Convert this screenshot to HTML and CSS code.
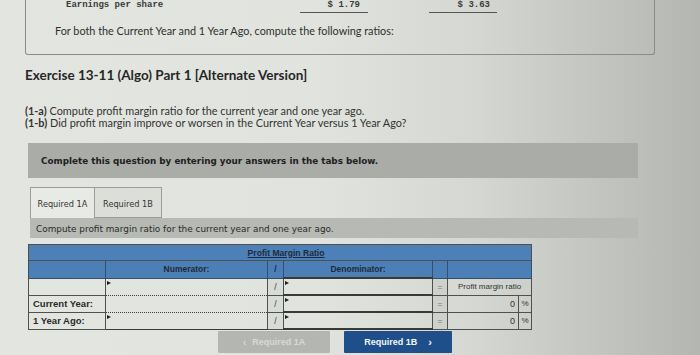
FILE: index.html
```html
<!DOCTYPE html>
<html>
<head>
<meta charset="utf-8">
<link rel="stylesheet" href="styles.css">
</head>
<body>
<div class="page">
  <div class="topbox">
    <div class="eps">
      <span class="eps-label">Earnings per share</span>
      <span class="eps-val v1">$ 1.79</span>
      <span class="eps-gap"></span>
      <span class="eps-val v2">$ 3.63</span>
    </div>
    <p class="intro">For both the Current Year and 1 Year Ago, compute the following ratios:</p>
  </div>

  <h1 class="title">Exercise 13-11 (Algo) Part 1 [Alternate Version]</h1>
  <p class="req first"><b>(1-a)</b> Compute profit margin ratio for the current year and one year ago.</p>
  <p class="req"><b>(1-b)</b> Did profit margin improve or worsen in the Current Year versus 1 Year Ago?</p>

  <div class="banner">Complete this question by entering your answers in the tabs below.</div>

  <div class="tabs">
    <div class="tab active">Required 1A</div>
    <div class="tab">Required 1B</div>
  </div>
  <div class="instr">Compute profit margin ratio for the current year and one year ago.</div>

  <table class="ratio">
    <colgroup>
      <col class="c-label"><col class="c-num"><col class="c-slash"><col class="c-den"><col class="c-eq"><col class="c-res"><col class="c-pct">
    </colgroup>
    <tr class="hrow1">
      <th colspan="7"><span class="htitle">Profit Margin Ratio</span></th>
    </tr>
    <tr class="hrow2">
      <th></th>
      <th>Numerator:</th>
      <th>/</th>
      <th>Denominator:</th>
      <th></th>
      <th colspan="2"></th>
    </tr>
    <tr class="brow">
      <td class="label"></td>
      <td class="num top"><div class="inp mark"></div></td>
      <td class="slash">/</td>
      <td class="den"><div class="inp mark"></div></td>
      <td class="eq">=</td>
      <td class="res-title" colspan="2">Profit margin ratio</td>
    </tr>
    <tr class="brow">
      <td class="label">Current Year:</td>
      <td class="num mid"><div class="inp"></div></td>
      <td class="slash">/</td>
      <td class="den"><div class="inp mark"></div></td>
      <td class="eq">=</td>
      <td class="res">0</td>
      <td class="pct">%</td>
    </tr>
    <tr class="brow">
      <td class="label">1 Year Ago:</td>
      <td class="num bot"><div class="inp mark"></div></td>
      <td class="slash">/</td>
      <td class="den"><div class="inp mark"></div></td>
      <td class="eq">=</td>
      <td class="res">0</td>
      <td class="pct">%</td>
    </tr>
  </table>

  <div class="nav">
    <button class="btn prev"><span class="chev">&lsaquo;</span>Required 1A</button>
    <button class="btn next">Required 1B<span class="chev">&rsaquo;</span></button>
  </div>
</div>
</body>
</html>
```

FILE: styles.css
```css
html, body {
  margin: 0;
  padding: 0;
}
body {
  width: 700px;
  height: 355px;
  overflow: hidden;
  background: linear-gradient(90deg, #e3e6e0 0%, #e1e4de 45%, #d5d7d2 68%, #c2c4bf 86%, #b4b6b1 100%);
  color: #2b2c2b;
  font-family: "Lato", "Liberation Sans", sans-serif;
}
.page {
  padding-left: 25px;
}

/* top box */
.topbox {
  box-sizing: border-box;
  width: 630px;
  height: 55px;
  border: 1px solid #8a8c88;
  border-top: none;
  border-radius: 0 0 3px 3px;
}
.eps {
  display: grid;
  grid-template-columns: 274px 68px 61px 68px;
  height: 13px;
  font-family: "Liberation Mono", monospace;
  font-weight: bold;
  font-size: 9px;
  line-height: 11px;
  color: #3a3b3a;
}
.eps-label {
  padding-left: 40px;
}
.eps-val {
  text-align: right;
  border-bottom: 1.5px solid #555;
}
.v1 { padding-right: 8px; }
.v2 { padding-right: 7px; }
.intro {
  margin: 11px 0 0 29px;
  font-size: 10.85px;
  line-height: 13px;
  color: #2f302f;
}

.title {
  margin: 12px 0 0 0;
  font-size: 13.5px;
  line-height: 16px;
  font-weight: bold;
  color: #262726;
}
.req {
  margin: 0;
  font-size: 10.9px;
  line-height: 11.5px;
  color: #333;
}
.req.first {
  margin-top: 22px;
}

.banner {
  box-sizing: border-box;
  margin: 15px 0 0 3px;
  width: 610px;
  height: 35px;
  padding: 11px 0 0 13px;
  background: #a9aca7;
  font-family: "DejaVu Sans", sans-serif;
  font-weight: bold;
  font-size: 8.8px;
  line-height: 14px;
  color: #1f201f;
}

.tabs {
  display: flex;
  margin: 9px 0 0 5px;
  height: 31px;
}
.tab {
  box-sizing: border-box;
  height: 31px;
  padding-top: 10px;
  text-align: center;
  font-family: "DejaVu Sans", sans-serif;
  font-size: 8.2px;
  line-height: 12px;
  color: #333;
  border: 1px solid #9b9d99;
  background: #dcdfd9;
}
.tab.active {
  width: 65px;
  background: #e8eae5;
  border-bottom: none;
}
.tab:not(.active) {
  width: 67px;
  border-left: none;
}
.instr {
  box-sizing: border-box;
  margin-left: 5px;
  width: 608px;
  height: 20px;
  padding: 5px 0 0 6px;
  background: #b6b9b4;
  font-family: "DejaVu Sans", sans-serif;
  font-size: 8.9px;
  line-height: 12px;
  color: #2a2b2a;
}

/* table */
.ratio {
  margin: 6px 0 0 3px;
  width: 503px;
  table-layout: fixed;
  border-collapse: collapse;
  font-family: "Liberation Sans", sans-serif;
  font-size: 8.5px;
  color: #222;
}
.c-label { width: 77px; }
.c-num { width: 162px; }
.c-slash { width: 16px; }
.c-den { width: 149px; }
.c-eq { width: 15px; }
.c-res { width: 71px; }
.c-pct { width: 13px; }

.ratio th, .ratio td {
  padding: 0;
  border: 1px solid #4f514e;
}
.hrow1 th {
  height: 15px;
  background: #4e80b8;
  text-align: center;
  font-weight: bold;
  font-size: 8.6px;
  color: #1c2a3c;
}
.htitle {
  text-decoration: underline;
  padding-left: 12px;
}
.hrow2 th {
  height: 16px;
  background: #4d7fb7;
  border-color: #354e6a;
  font-weight: bold;
  font-size: 8.5px;
  color: #1c2a3c;
  text-align: center;
}
.brow td {
  height: 15px;
}
.label {
  padding-left: 4px !important;
  font-weight: bold;
  font-size: 9.5px;
  color: #2a2a2a;
}
.num {
  border-top: 1px dotted #3c3c3c !important;
  border-bottom: 1px dotted #3c3c3c !important;
}
.num.top { border-top: 1px solid #3c3c3c !important; }
.num.bot { border-bottom: 1px solid #3c3c3c !important; }
.den {
  border-top: 2px solid #383a37 !important;
  border-bottom: 2px solid #383a37 !important;
}
.inp {
  position: relative;
  height: 14px;
}
.inp.mark::before {
  content: "";
  position: absolute;
  left: 1px;
  top: 1px;
  border-left: 4px solid #1e1e1e;
  border-top: 2.5px solid transparent;
  border-bottom: 2.5px solid transparent;
}
.slash {
  text-align: center;
  color: #3a3a3a;
  background: rgba(170, 175, 168, 0.15);
}
.eq {
  text-align: center;
  color: #777;
  background: rgba(170, 175, 168, 0.2);
}
.res-title {
  text-align: center;
  font-size: 8px;
  color: #333;
}
.res {
  text-align: right;
  padding-right: 3px !important;
  font-size: 9px;
  color: #333;
}
.pct {
  text-align: center;
  font-size: 8px;
  color: #333;
}

/* nav buttons */
.nav {
  display: flex;
  gap: 14px;
  margin: 1px 0 0 193px;
}
.btn {
  box-sizing: border-box;
  height: 22px;
  border: none;
  border-radius: 1px;
  font-family: "Liberation Sans", sans-serif;
  font-weight: bold;
  font-size: 9px;
  padding: 0;
  display: flex;
  align-items: center;
  justify-content: center;
}
.btn.prev {
  width: 112px;
  background: #b3b6b1;
  color: #d8dad6;
}
.btn.prev .chev {
  margin-right: 6px;
  font-size: 11px;
}
.btn.next {
  width: 108px;
  background: #1e4f8b;
  color: #f4f6f8;
}
.btn.next .chev {
  margin-left: 11px;
  font-size: 11px;
}
```
